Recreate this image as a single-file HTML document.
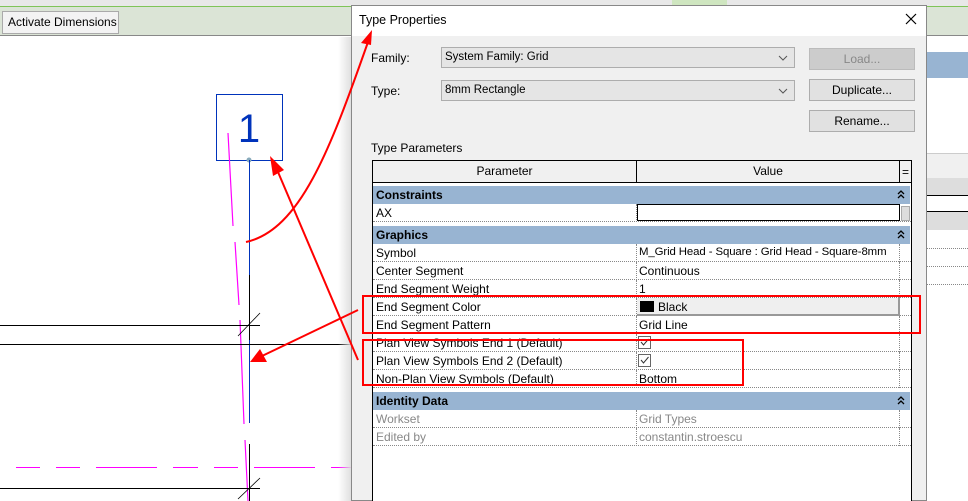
<!DOCTYPE html>
<html><head><style>
*{margin:0;padding:0;box-sizing:border-box}
body{width:968px;height:501px;overflow:hidden;position:relative;background:#fff;font-family:"Liberation Sans",sans-serif;font-size:12px;color:#000}
.a{position:absolute}
.row{position:absolute;left:373px;width:538px;height:18px;border-bottom:1px dotted #888;}
.row span{position:absolute;top:2px;font-size:12px;white-space:nowrap}
.row .p{left:3px}.row .v{left:266px}
.row .sep{position:absolute;left:263px;top:0;height:18px;border-left:1px dotted #888}
.row .rs{position:absolute;left:526px;top:0;height:18px;border-left:1px dotted #888}
.grp{position:absolute;left:373px;width:537px;height:18px;background:#98b4d2;font-weight:bold}
.grp span{position:absolute;left:3px;top:2px}
.grp svg{position:absolute;right:5px;top:4px}
.btn{position:absolute;left:809px;width:106px;height:22px;background:#e1e1e1;border:1px solid #adadad;text-align:center;line-height:20px;font-size:12px}
.dd{position:absolute;left:441px;width:354px;height:21px;background:#e5e5e5;border:1px solid #adadad;padding-left:3px;line-height:19px;font-size:11.5px}
.dd svg{position:absolute;right:6px;top:7px}
.gray span{color:#888}
</style></head><body>
<div class="a" style="left:0;top:0;width:968px;height:7px;background:#e8e8e8;border-bottom:1px solid #7fc458"></div>
<div class="a" style="left:0;top:7px;width:968px;height:29px;background:#dbe4d6;border-bottom:1px solid #888"></div>
<div class="a" style="left:2px;top:11px;width:117px;height:23px;background:#f3f3f3;border:1px solid #aaa;font-size:12px;line-height:21px;padding-left:5px;white-space:nowrap">Activate Dimensions</div>
<div class="a" style="left:672px;top:0;width:55px;height:7px;background:#cfe6c0"></div>
<div class="a" style="left:927px;top:36px;width:41px;height:465px;background:#fff"></div>
<div class="a" style="left:927px;top:52px;width:41px;height:26px;background:#98b4d2"></div>
<div class="a" style="left:927px;top:153px;width:41px;height:25px;background:#f0f0f0;border-top:1px solid #ccc"></div>
<div class="a" style="left:927px;top:178px;width:41px;height:18px;background:#ddd;border-bottom:1px solid #000"></div>
<div class="a" style="left:927px;top:211px;width:41px;height:1px;background:#000"></div>
<div class="a" style="left:927px;top:212px;width:41px;height:18px;background:#ddd"></div>
<div class="a" style="left:927px;top:248px;width:41px;border-top:1px dotted #888"></div>
<div class="a" style="left:927px;top:266px;width:41px;border-top:1px dotted #888"></div>
<div class="a" style="left:927px;top:284px;width:41px;border-top:1px dotted #888"></div>
<svg class="a" style="left:0;top:37px" width="352" height="464" viewBox="0 37 352 464">
<rect x="216.5" y="94.5" width="66" height="66" fill="none" stroke="#0033bb" stroke-width="1"/>
<text x="249" y="142" font-family="Liberation Sans" font-size="40" fill="#0033bb" text-anchor="middle">1</text>
<circle cx="249" cy="160" r="2.5" fill="#8ab"/>
<line x1="249.5" y1="160" x2="249.5" y2="423" stroke="#0033bb"/>
<line x1="249.5" y1="275" x2="249.5" y2="340" stroke="#000"/>
<line x1="249.5" y1="444" x2="249.5" y2="501" stroke="#000"/>
<path d="M228 133 L233 226 M235 242 L239 305 M240 320 L244 424 M245 440 L248 501" stroke="#f0f" stroke-width="1.2" fill="none"/>
<line x1="0" y1="325.5" x2="260" y2="325.5" stroke="#000"/>
<line x1="0" y1="344.5" x2="352" y2="344.5" stroke="#000"/>
<line x1="0" y1="488.5" x2="260" y2="488.5" stroke="#000"/>
<line x1="238" y1="336" x2="260" y2="313" stroke="#000" stroke-width=".8"/>
<line x1="238" y1="499" x2="260" y2="478" stroke="#000" stroke-width=".8"/>
<path d="M16 467.5 H40 M56 467.5 H80 M96 467.5 H157 M173 467.5 H198 M214 467.5 H238 M254 467.5 H315 M331 467.5 H352" stroke="#f0f"/>
</svg>
<div class="a" style="left:338px;top:37px;width:14px;height:464px;background:linear-gradient(to right,rgba(255,255,255,0),#ddd)"></div>
<div class="a" style="left:351px;top:5px;width:576px;height:496px;background:#f0f0f0;border:1px solid #888"></div>
<div class="a" style="left:352px;top:6px;width:574px;height:30px;background:#fff"></div>
<div class="a" style="left:359px;top:13px;font-size:12.5px">Type Properties</div>
<svg class="a" style="left:905px;top:13px" width="12" height="12"><path d="M1 1 L11 11 M11 1 L1 11" stroke="#000" stroke-width="1.2"/></svg>
<div class="a" style="left:371px;top:51px">Family:</div>
<div class="a" style="left:371px;top:84px">Type:</div>
<div class="dd" style="top:47px">System Family: Grid<svg width="10" height="6"><path d="M1 1 L5 5 L9 1" stroke="#555" fill="none"/></svg></div>
<div class="dd" style="top:80px">8mm Rectangle<svg width="10" height="6"><path d="M1 1 L5 5 L9 1" stroke="#555" fill="none"/></svg></div>
<div class="btn" style="top:48px;background:#ccc;border-color:#bbb;color:#888">Load...</div>
<div class="btn" style="top:79px">Duplicate...</div>
<div class="btn" style="top:110px">Rename...</div>
<div class="a" style="left:371px;top:141px">Type Parameters</div>
<div class="a" style="left:372px;top:160px;width:540px;height:341px;background:#fff;border:1px solid #000;border-bottom:none"></div>
<div class="a" style="left:373px;top:161px;width:538px;height:22px;background:#f0f0f0;border-bottom:1px solid #000"></div>
<div class="a" style="left:373px;top:161px;width:264px;height:22px;border-right:1px solid #000;text-align:center;line-height:21px">Parameter</div>
<div class="a" style="left:637px;top:161px;width:263px;height:22px;border-right:1px solid #000;text-align:center;line-height:21px">Value</div>
<div class="a" style="left:902px;top:165px">=</div>
<div class="grp" style="top:186px"><span>Constraints</span><svg width="8" height="10"><path d="M1 4 L4 1 L7 4 M1 8 L4 5 L7 8" stroke="#000" stroke-width="1.3" fill="none"/></svg></div>
<div class="row" style="top:204px"><span class="p">AX</span><div class="sep"></div></div>
<div class="a" style="left:637px;top:204px;width:263px;height:17px;border:1px solid #000;background:#fff"></div>
<div class="a" style="left:901px;top:206px;width:9px;height:15px;background:#ddd;border:1px solid #aaa"></div>
<div class="grp" style="top:226px"><span>Graphics</span><svg width="8" height="10"><path d="M1 4 L4 1 L7 4 M1 8 L4 5 L7 8" stroke="#000" stroke-width="1.3" fill="none"/></svg></div>
<div class="row" style="top:244px"><span class="p">Symbol</span><div class="sep"></div><span class="v" style="font-size:11.4px;letter-spacing:-.1px">M_Grid Head - Square : Grid Head - Square-8mm</span><div class="rs"></div></div>
<div class="row" style="top:262px"><span class="p">Center Segment</span><div class="sep"></div><span class="v">Continuous</span><div class="rs"></div></div>
<div class="row" style="top:280px"><span class="p">End Segment Weight</span><div class="sep"></div><span class="v">1</span><div class="rs"></div></div>
<div class="row" style="top:298px"><span class="p">End Segment Color</span><div class="sep"></div><div class="rs"></div></div>
<div class="a" style="left:637px;top:298px;width:263px;height:18px;background:#efefef;border-right:2px solid #999;border-bottom:2px solid #999"></div>
<div class="a" style="left:640px;top:301px;width:14px;height:11px;background:#000"></div>
<div class="a" style="left:658px;top:300px">Black</div>
<div class="row" style="top:316px"><span class="p">End Segment Pattern</span><div class="sep"></div><span class="v">Grid Line</span><div class="rs"></div></div>
<div class="row" style="top:334px"><span class="p">Plan View Symbols End 1 (Default)</span><div class="sep"></div><div class="rs"></div></div>
<div class="row" style="top:352px"><span class="p">Plan View Symbols End 2 (Default)</span><div class="sep"></div><div class="rs"></div></div>
<div class="row" style="top:370px"><span class="p">Non-Plan View Symbols (Default)</span><div class="sep"></div><span class="v">Bottom</span><div class="rs"></div></div>
<svg class="a" style="left:638px;top:336px" width="16" height="34"><rect x=".5" y=".5" width="12" height="12" fill="#fff" stroke="#666"/><path d="M3 6 L5.5 9 L10.5 3" stroke="#333" fill="none"/><rect x=".5" y="18.5" width="12" height="12" fill="#fff" stroke="#666"/><path d="M3 24 L5.5 27 L10.5 21" stroke="#333" fill="none"/></svg>
<div class="grp" style="top:392px"><span>Identity Data</span><svg width="8" height="10"><path d="M1 4 L4 1 L7 4 M1 8 L4 5 L7 8" stroke="#000" stroke-width="1.3" fill="none"/></svg></div>
<div class="row gray" style="top:410px"><span class="p">Workset</span><div class="sep"></div><span class="v">Grid Types</span><div class="rs"></div></div>
<div class="row gray" style="top:428px"><span class="p">Edited by</span><div class="sep"></div><span class="v">constantin.stroescu</span><div class="rs"></div></div>
<div class="a" style="left:362px;top:295px;width:559px;height:39px;border:2px solid #f00"></div>
<div class="a" style="left:362px;top:339px;width:382px;height:47px;border:2px solid #f00"></div>
<!-- arrows overlay -->
<svg class="a" style="left:0;top:0" width="400" height="501">
<path d="M246 242 C300 230 330 150 368 42" stroke="#f00" stroke-width="2" fill="none"/>
<polygon points="372,30 361,43 371,45" fill="#f00"/>
<line x1="358" y1="360" x2="278" y2="172" stroke="#f00" stroke-width="2"/>
<polygon points="270,156 284,170 273,176" fill="#f00"/>
<line x1="358" y1="310" x2="262" y2="356" stroke="#f00" stroke-width="2"/>
<polygon points="250,362 260,349 267,362" fill="#f00"/>
</svg>
</body></html>
